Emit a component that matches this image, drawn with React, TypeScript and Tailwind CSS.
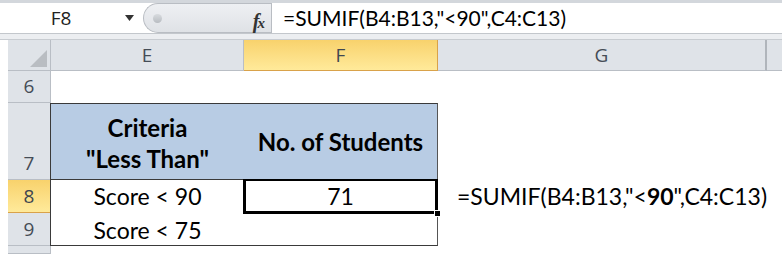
import React from 'react';

const hdr = "bg-[#dfe3e8] border-r border-b border-[#b9bec5] flex items-center justify-center text-[#454c56] font-['Open_Sans',sans-serif] text-[19px]";
const hdrSel = "bg-gradient-to-b from-[#f8d26c] to-[#ffea9a] border-r border-b border-[#d9a24a] flex items-center justify-center text-[#3f4650] font-['Open_Sans',sans-serif] text-[19px]";
const cell = "font-['Lato',sans-serif] text-[23px] text-black";

const App: React.FC = () => {
  return (
    <div className="w-[782px] h-[254px] overflow-hidden bg-white flex flex-col">
      {/* Formula bar */}
      <div className="h-[3px] bg-[#d3d7dc]" />
      <div className="h-[30px] flex items-center bg-white">
        <div className="w-[114px] h-full flex items-center justify-center pl-[8px] font-['Open_Sans',sans-serif] text-[19px] text-[#222]">
          F8
        </div>
        <div className="w-[29px] flex items-center pl-[11px]">
          <svg width="9" height="6" viewBox="0 0 9 6"><path d="M0 0h9L4.5 6z" fill="#333" /></svg>
        </div>
        <div className="w-[128px] h-[30px] relative flex items-center bg-gradient-to-b from-[#eef0f3] to-[#dfe2e6] rounded-l-[15px] border-l border-y border-[#b9bdc3]">
          <div className="absolute left-[9px] top-[10px] w-[9px] h-[9px] rounded-full bg-gradient-to-b from-[#d8dbdf] to-[#b8bcc1]" />
          <span className="absolute right-[8px] top-[2px] font-['Liberation_Serif',serif] italic font-bold text-[20px] text-[#333] tracking-[-2px]">
            f<span className="text-[15px]">x</span>
          </span>
        </div>
        <div className="w-px h-full bg-[#b9bdc3]" />
        <div className="pl-[11px] font-['Lato',sans-serif] text-[21px] text-black">
          =SUMIF(B4:B13,"&lt;90",C4:C13)
        </div>
      </div>
      <div className="h-px bg-[#c3c7cc]" />
      <div className="h-[5px] bg-[#eceef1]" />
      <div className="h-px bg-[#c8ccd1]" />

      {/* Sheet */}
      <div className="grid grid-cols-[8px_43px_193px_194px_329px_1fr] grid-rows-[31px_32px_77px_33px_33px_1fr] flex-1">
        {/* Header row */}
        <div />
        <div className="bg-[#dfe3e8] border-r border-b border-[#b9bec5] relative">
          <svg className="absolute right-[3px] bottom-[3px]" width="17" height="17" viewBox="0 0 17 17"><path d="M17 0V17H0z" fill="#b9bdc2" /></svg>
        </div>
        <div className={hdr}>E</div>
        <div className={hdrSel}>F</div>
        <div className={hdr + " border-r-[2px] border-r-[#b0b5bb]"}>G</div>
        <div className="bg-[#dfe3e8] border-b border-[#b9bec5]" />

        {/* Row 6 */}
        <div />
        <div className={hdr}>6</div>
        <div className="col-span-4 bg-white" />

        {/* Row 7 */}
        <div />
        <div className={hdr + " !items-end pb-[2px]"}>7</div>
        <div className="col-span-2 grid grid-cols-[193px_194px] bg-[#b8cce4] border border-[#3a3a3a] border-r-[#555] -ml-px font-['Lato',sans-serif] text-[24px] font-bold text-black">
          <div className="flex flex-col items-center justify-end pb-[5px] leading-[31px] text-center">
            <span>Criteria</span>
            <span>"Less Than"</span>
          </div>
          <div className="flex items-center justify-center -ml-px">No. of Students</div>
        </div>
        <div className="col-span-2" />

        {/* Row 8 */}
        <div />
        <div className={hdrSel}>8</div>
        <div className={"border-l border-[#3a3a3a] -ml-px flex items-center justify-center " + cell}>Score &lt; 90</div>
        <div className={"relative border-r border-[#555] flex items-center justify-center " + cell}>
          71
          <div className="absolute -left-px -top-px -right-px -bottom-px border-[3px] border-t-2 border-black" />
          <div className="absolute -right-[4px] -bottom-[4px] w-[7px] h-[7px] bg-black border border-white" />
        </div>
        <div className={"col-span-2 flex items-center pl-[19px] " + cell}>
          =SUMIF(B4:B13,"&lt;<b>90</b>",C4:C13)
        </div>

        {/* Row 9 */}
        <div />
        <div className={hdr}>9</div>
        <div className={"col-span-2 border-l border-r border-b border-[#3a3a3a] border-r-[#555] -ml-px grid grid-cols-[193px_194px] " + cell}>
          <div className="flex items-center justify-center">Score &lt; 75</div>
          <div />
        </div>
        <div className="col-span-2" />

        {/* Row 10 */}
        <div />
        <div className={hdr} />
        <div className="col-span-4" />
      </div>
    </div>
  );
};

export default App;
